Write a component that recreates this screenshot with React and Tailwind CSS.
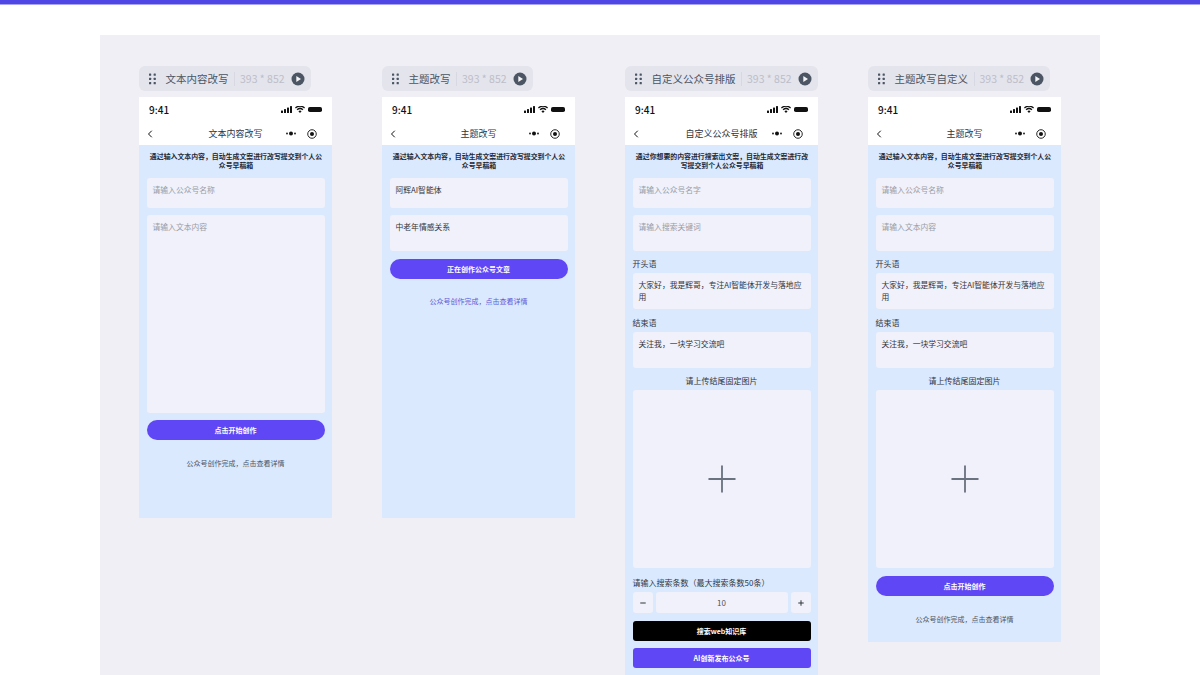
import React from 'react';
import { ChevronLeft, Plus, Minus } from 'lucide-react';

const Signal = () => (
  <svg width="11" height="7" viewBox="0 0 11 7" fill="#111">
    <rect x="0" y="4.5" width="2" height="2.5" rx="0.5" />
    <rect x="3" y="3" width="2" height="4" rx="0.5" />
    <rect x="6" y="1.5" width="2" height="5.5" rx="0.5" />
    <rect x="9" y="0" width="2" height="7" rx="0.5" />
  </svg>
);

const Wifi = () => (
  <svg width="10" height="7" viewBox="0 0 10 7" fill="#111">
    <path d="M5 7 3.4 5.2a2.3 2.3 0 0 1 3.2 0L5 7ZM2.6 4.3 1.6 3.2a5 5 0 0 1 6.8 0l-1 1.1a3.6 3.6 0 0 0-4.8 0ZM.8 2.4 0 1.5a7.4 7.4 0 0 1 10 0l-.8.9a6.2 6.2 0 0 0-8.4 0Z" />
  </svg>
);

const Battery = () => (
  <svg width="14" height="5" viewBox="0 0 14 5" fill="#111">
    <rect x="0" y="0" width="14" height="5" rx="1.8" />
  </svg>
);

const PlayBadge = () => (
  <svg width="14" height="14" viewBox="0 0 14 14" className="ml-[6px] shrink-0">
    <circle cx="7" cy="7" r="6.5" fill="#4b5563" />
    <path d="M5.3 3.9 10 7l-4.7 3.1Z" fill="#f3f4f6" />
  </svg>
);

const Grip = () => (
  <svg width="7" height="12" viewBox="0 0 7 12" fill="#4b5563" className="shrink-0">
    <rect x="0" y="0.5" width="2.2" height="2.2" rx="0.5" />
    <rect x="4.6" y="0.5" width="2.2" height="2.2" rx="0.5" />
    <rect x="0" y="4.7" width="2.2" height="2.2" rx="0.5" />
    <rect x="4.6" y="4.7" width="2.2" height="2.2" rx="0.5" />
    <rect x="0" y="9" width="2.2" height="2.2" rx="0.5" />
    <rect x="4.6" y="9" width="2.2" height="2.2" rx="0.5" />
  </svg>
);

const MoreDots = () => (
  <svg width="10" height="5" viewBox="0 0 10 5" fill="#111">
    <circle cx="1" cy="2.5" r="0.9" />
    <circle cx="5" cy="2.5" r="2" />
    <circle cx="9" cy="2.5" r="0.9" />
  </svg>
);

const Target = () => (
  <svg width="10" height="10" viewBox="0 0 11 11">
    <circle cx="5.5" cy="5.5" r="4.7" fill="none" stroke="#111" strokeWidth="1" />
    <circle cx="5.5" cy="5.5" r="2.2" fill="#111" />
  </svg>
);

const Field = ({ children, h = 'h-[30px]', placeholder }) => (
  <div className={`${h} rounded-[3px] bg-[#f0f1fa] pl-[6px] pr-[5px] pt-[6px] text-[7.8px] leading-[12px] ${placeholder ? 'text-[#9a9ca6]' : 'text-[#33353d]'}`}>
    {children}
  </div>
);

const Label = ({ children, center }) => (
  <div className={`text-[8px] leading-[10px] text-[#33353d] ${center ? 'text-center' : ''}`}>{children}</div>
);

const PurpleButton = ({ children, rounded = 'rounded-full' }) => (
  <div className={`flex h-[20px] items-center justify-center ${rounded} bg-[#6047f5] text-[7px] font-bold text-white`}>
    {children}
  </div>
);

const Phone = ({ name, title, desc, height, children }) => (
  <div className="w-[193px] shrink-0">
    <div className="flex h-[25px] w-fit items-center whitespace-nowrap rounded-[6px] bg-[#e4e4ec] pl-[10px] pr-[6px]">
      <Grip />
      <span className="ml-[9.5px] text-[10.5px] text-[#4b5563]">{name}</span>
      <span className="ml-[5.5px] border-l border-[#d8d8e2] pl-[5px] text-[10.5px] leading-[14px] text-[#bcbec9]">393 * 852</span>
      <PlayBadge />
    </div>
    <div className={`mt-[6px] overflow-hidden bg-[#dbe9fe] ${height}`}>
      <div className="bg-white">
        <div className="flex h-[24px] items-center justify-between pl-[10px] pr-[10px]">
          <span className="text-[10px] font-medium text-[#111]">9:41</span>
          <div className="flex items-center gap-[3px] pt-[1px]">
            <Signal />
            <Wifi />
            <Battery />
          </div>
        </div>
        <div className="relative flex h-[24px] items-center justify-between pl-[5px] pr-[15px] pt-[1px]">
          <ChevronLeft size={12} strokeWidth={2} color="#111" />
          <span className="absolute left-0 right-0 text-center text-[9px] text-[#33353d]">{title}</span>
          <div className="flex items-center gap-[11px]">
            <MoreDots />
            <Target />
          </div>
        </div>
      </div>
      <div className="px-[7.5px] pt-[7px]">
        <p className="pl-[1px] text-center text-[6.9px] font-bold leading-[9px] text-[#1f2937]">{desc}</p>
        {children}
      </div>
    </div>
  </div>
);

const Hint = ({ children, color = 'text-[#4b5563]', mt }) => (
  <div className={`${mt} text-center text-[7px] leading-[10px] ${color}`}>{children}</div>
);

const UploadBox = () => (
  <div className="mt-[4px] flex h-[178px] items-center justify-center rounded-[3px] bg-[#f0f1fa]">
    <Plus size={44} strokeWidth={1} color="#6b7280" />
  </div>
);

const CustomFields = ({ nameHint, keyHint }) => (
  <div>
    <div className="mt-[8px]"><Field placeholder>{nameHint}</Field></div>
    <div className="mt-[7px]"><Field placeholder h="h-[36px]">{keyHint}</Field></div>
    <div className="mt-[8px]"><Label>开头语</Label></div>
    <div className="mt-[4px]"><Field h="h-[36px]">大家好，我是辉哥，专注AI智能体开发与落地应用</Field></div>
    <div className="mt-[9px]"><Label>结束语</Label></div>
    <div className="mt-[4px]"><Field h="h-[36px]">关注我，一块学习交流吧</Field></div>
    <div className="mt-[8px]"><Label center>请上传结尾固定图片</Label></div>
    <UploadBox />
  </div>
);

export default function App() {
  return (
    <div className="h-[675px] w-[1200px] overflow-hidden bg-white font-['Noto_Sans_CJK_SC','Noto_Sans',sans-serif]">
      <div className="h-[5px] border-b border-[#a9a5f2] bg-[#4f46e5]" />
      <div className="mx-[100px] mt-[30px] flex h-[640px] gap-[50px] overflow-hidden bg-[#f0eff5] pl-[39px] pt-[31px]">
        <Phone
          name="文本内容改写"
          title="文本内容改写"
          desc="通过输入文本内容，自动生成文案进行改写提交到个人公众号早稿箱"
          height="h-[421px]"
        >
          <div className="mt-[8px]"><Field placeholder>请输入公众号名称</Field></div>
          <div className="mt-[7px]"><Field placeholder h="h-[198px]">请输入文本内容</Field></div>
          <div className="mt-[7px]"><PurpleButton>点击开始创作</PurpleButton></div>
          <Hint mt="mt-[18px]">公众号创作完成，点击查看详情</Hint>
        </Phone>

        <Phone
          name="主题改写"
          title="主题改写"
          desc="通过输入文本内容，自动生成文案进行改写提交到个人公众号早稿箱"
          height="h-[421px]"
        >
          <div className="mt-[8px]"><Field>阿辉AI智能体</Field></div>
          <div className="mt-[7px]"><Field h="h-[36px]">中老年情感关系</Field></div>
          <div className="mt-[8px]"><PurpleButton>正在创作公众号文章</PurpleButton></div>
          <Hint mt="mt-[17px]" color="text-[#5b5bd6]">公众号创作完成，点击查看详情</Hint>
        </Phone>

        <Phone
          name="自定义公众号排版"
          title="自定义公众号排版"
          desc="通过你想要的内容进行搜索出文案，自动生成文案进行改写提交到个人公众号早稿箱"
          height="h-[578px]"
        >
          <CustomFields nameHint="请输入公众号名字" keyHint="请输入搜索关键词" />
          <div className="mt-[10px]"><Label>请输入搜索条数（最大搜索条数50条）</Label></div>
          <div className="mt-[4px] flex h-[21px] gap-[3px]">
            <div className="flex w-[20px] items-center justify-center rounded-[3px] bg-[#f0f1fa]">
              <Minus size={8} strokeWidth={3} color="#33353d" />
            </div>
            <div className="flex flex-1 items-center justify-center rounded-[3px] bg-[#f0f1fa] text-[8px] text-[#4b5563]">10</div>
            <div className="flex w-[20px] items-center justify-center rounded-[3px] bg-[#f0f1fa]">
              <Plus size={8} strokeWidth={3} color="#33353d" />
            </div>
          </div>
          <div className="mt-[8px] flex h-[20px] items-center justify-center rounded-[3px] bg-black text-[7px] font-bold text-white">搜索web知识库</div>
          <div className="mt-[7px]"><PurpleButton rounded="rounded-[3px]">AI创新发布公众号</PurpleButton></div>
        </Phone>

        <Phone
          name="主题改写自定义"
          title="主题改写"
          desc="通过输入文本内容，自动生成文案进行改写提交到个人公众号早稿箱"
          height="h-[545px]"
        >
          <CustomFields nameHint="请输入公众号名称" keyHint="请输入文本内容" />
          <div className="mt-[8px]"><PurpleButton>点击开始创作</PurpleButton></div>
          <Hint mt="mt-[18px]">公众号创作完成，点击查看详情</Hint>
        </Phone>
      </div>
    </div>
  );
}
